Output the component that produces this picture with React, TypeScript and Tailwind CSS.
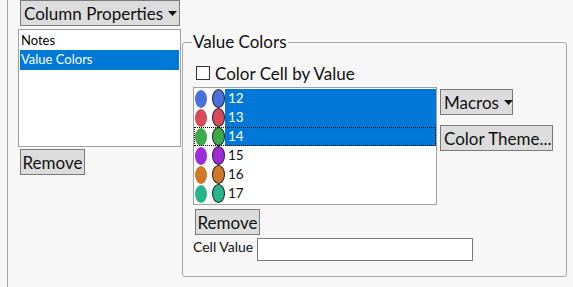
import { FC } from 'react';

const FONT = "font-['Lato','Segoe_UI','Open_Sans',sans-serif]";

const rows = [
    { label: '12', color: '#4a70dc', selected: true },
    { label: '13', color: '#d64a5a', selected: true },
    { label: '14', color: '#3aaa48', selected: true, focused: true },
    { label: '15', color: '#a12ad8' },
    { label: '16', color: '#d07828' },
    { label: '17', color: '#2ab48c' },
];

const Btn: FC<{ children: React.ReactNode; className?: string }> = ({ children, className = '' }) => (
    <button
        className={`h-[26px] border border-[#7a7a7a] bg-[#dcdcdc] text-[17px] leading-none text-[#111] whitespace-nowrap flex items-center ${className}`}
    >
        {children}
    </button>
);

const Caret = () => (
    <svg width="9" height="5" viewBox="0 0 9 5" className="ml-[5px] mt-[1px] shrink-0">
        <path d="M0 0h9L4.5 5z" fill="#111" />
    </svg>
);

export default function App() {
    return (
        <div className={`w-[573px] h-[287px] bg-[#f7f7f7] flex overflow-hidden ${FONT}`}>
            <div className="w-[7px] shrink-0" />
            <div className="w-px bg-[#a8a8a8] shrink-0" />

            {/* Left column */}
            <div className="flex flex-col pl-[10px] shrink-0">
                <Btn className="ml-[2px] w-[160px] pl-[3px]">
                    Column Properties
                    <Caret />
                </Btn>
                <div className="mt-[3px] w-[163px] h-[118px] border border-[#a0a0a0] bg-white p-[1px] text-[13px] leading-[19px] whitespace-nowrap">
                    <div className="pl-[1px] h-[19px]">Notes</div>
                    <div className="pl-[1px] h-[20px] bg-[#0078d7] text-white">Value Colors</div>
                </div>
                <Btn className="ml-[2px] mt-[2px] w-[65px] justify-center">Remove</Btn>
            </div>

            {/* Value Colors group */}
            <fieldset className="ml-px mt-[31px] w-[385px] h-[246px] border border-[#a8a8a8] rounded-[3px] pl-[10px] shrink-0">
                <legend className="-ml-[1px] px-[1px] text-[17px] leading-[22px] text-[#111]">Value Colors</legend>
                <div className="flex items-center mt-[12px] ml-[3px] h-[16px]">
                    <div className="w-[14px] h-[14px] border border-[#333] bg-white" />
                    <span className="ml-[5px] text-[17px] leading-none text-[#111] whitespace-nowrap">Color Cell by Value</span>
                </div>
                <div className="flex mt-[6px]">
                    <div className="w-[244px] h-[118px] border border-[#a0a0a0] bg-white pt-px text-[13.5px]">
                        {rows.map(r => (
                            <div
                                key={r.label}
                                className={`h-[19px] flex items-center ${r.focused ? 'outline-1 outline-dotted outline-black -outline-offset-1' : ''}`}
                            >
                                <span
                                    className="ml-[1px] w-[12px] h-[18px] rounded-[50%] shrink-0"
                                    style={{ backgroundColor: r.color }}
                                />
                                <span
                                    className="ml-[5px] w-[13px] h-[19px] rounded-[50%] border border-[#222] shrink-0"
                                    style={{ backgroundColor: r.color }}
                                />
                                <span
                                    className={`h-[19px] flex-1 pl-[3px] leading-[19px] ${r.selected ? 'bg-[#0078d7] text-white' : 'text-[#111]'}`}
                                >
                                    {r.label}
                                </span>
                            </div>
                        ))}
                    </div>
                    <div className="flex flex-col ml-[3px] mt-[2px] gap-[10px] items-start">
                        <Btn className="w-[73px] pl-[3px]">
                            Macros
                            <Caret />
                        </Btn>
                        <Btn className="w-[113px] pl-[3px]">Color Theme...</Btn>
                    </div>
                </div>
                <Btn className="ml-[2px] mt-[4px] w-[65px] justify-center">Remove</Btn>
                <div className="flex items-start mt-[3px]">
                    <span className="text-[14px] leading-[17px] text-[#111] w-[64px] whitespace-nowrap">Cell Value</span>
                    <div className="w-[216px] h-[23px] border border-[#7a7a7a] bg-white" />
                </div>
            </fieldset>
        </div>
    );
}
